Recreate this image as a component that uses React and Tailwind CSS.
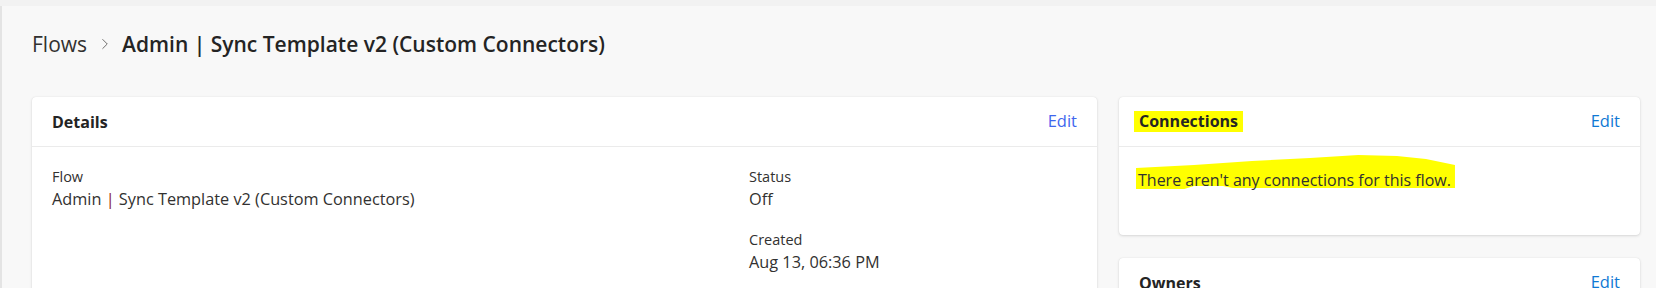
import React from 'react';
import { ChevronRight } from 'lucide-react';

const Card = ({ title, editClass, highlight, children, className }) => (
  <div className={`bg-white rounded-[4px] shadow-[0_1px_3px_rgba(0,0,0,0.13),0_0_1px_rgba(0,0,0,0.12)] ${className || ''}`}>
    <div className="h-[50px] flex items-center justify-between pl-5 pr-5 border-b border-[#ebebeb]">
      {highlight ? (
        <span className="inline-block -ml-[5px] px-[5px] bg-[#ffff00] leading-[21px] text-[16px] font-bold text-[#242424]">
          {title}
        </span>
      ) : (
        <span className="text-[16px] font-bold text-[#242424]">{title}</span>
      )}
      <span className={`text-[16.5px] ${editClass}`}>Edit</span>
    </div>
    {children}
  </div>
);

const Field = ({ label, children }) => (
  <div className="flex flex-col">
    <span className="text-[14.5px] leading-5 font-medium text-[#323130]">{label}</span>
    <span className="text-[16.3px] leading-6 text-[#323130]">{children}</span>
  </div>
);

export default function App() {
  return (
    <div className="min-h-screen bg-[#f8f8f8] font-['Open_Sans',sans-serif] text-[#242424]">
      <div className="h-[6px] bg-[#f2f2f2]" />
      <div className="border-l-2 border-[#e4e4e4] pl-[30px] pr-4 pb-10">
        {/* breadcrumb */}
        <div className="flex items-center pt-[23px] mb-[39px] h-[52px] leading-7">
          <span className="text-[21px] text-[#323130]">Flows</span>
          <ChevronRight size={18} strokeWidth={1.2} className="text-[#605e5c] ml-[9px] mr-[8px]" />
          <span className="text-[21px] font-semibold text-[#242424]">
            Admin | Sync Template v2 (Custom Connectors)
          </span>
        </div>

        <div className="grid grid-cols-[1065px_521px] gap-[22px] items-start">
          <Card title="Details" editClass="text-[#3f66ee]" className="h-[300px]">
            <div className="grid grid-cols-[697px_1fr] px-5 pt-[20px]">
              <Field label="Flow">
                Admin <span className="text-[#8a1f1f]">|</span> Sync Template v2 (Custom Connectors)
              </Field>
              <div className="flex flex-col gap-[19px]">
                <Field label="Status">Off</Field>
                <Field label="Created">Aug 13, 06:36 PM</Field>
              </div>
            </div>
          </Card>

          <div className="flex flex-col gap-[23px]">
            <Card title="Connections" editClass="text-[#0f78d4]" highlight className="h-[138px]">
              <div className="pl-[19px] pt-[21px]">
                <span className="relative inline-block text-[16px] leading-6 text-[#323130]">
                  <svg
                    className="absolute -left-[2px] -top-[13px] h-[34px] w-[calc(100%+6px)]"
                    viewBox="0 0 330 34"
                    preserveAspectRatio="none"
                  >
                    <path
                      d="M0 13 L60 10 L120 6 L180 3 L230 0 L270 1 L300 4 L330 10 L330 33 L100 33 L90 31 L60 31 L50 34 L0 34 Z"
                      fill="#ffff00"
                    />
                  </svg>
                  <span className="relative">There aren't any connections for this flow.</span>
                </span>
              </div>
            </Card>
            <Card title="Owners" editClass="text-[#0f78d4]" className="h-[120px]" />
          </div>
        </div>
      </div>
    </div>
  );
}
